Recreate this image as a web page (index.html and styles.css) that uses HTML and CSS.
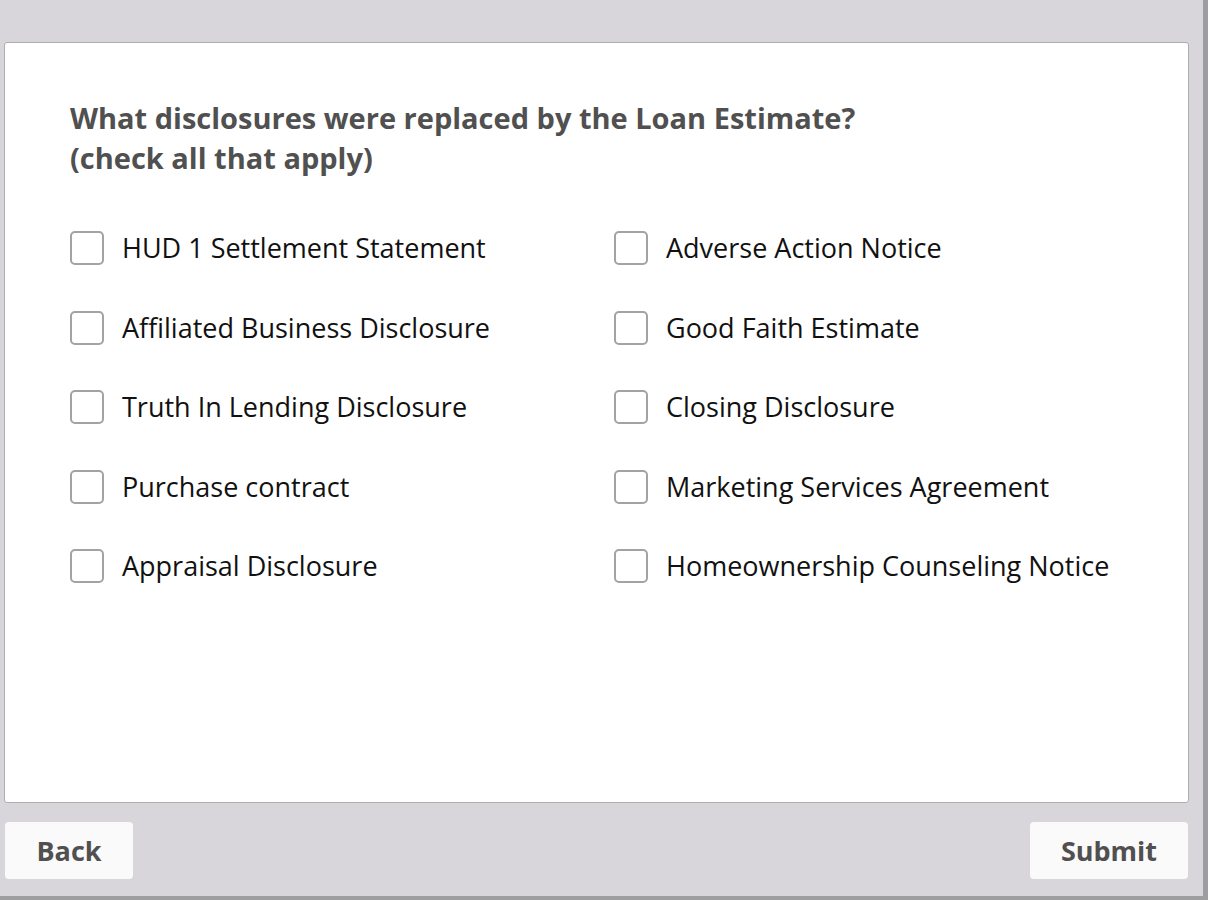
FILE: index.html
```html
<!DOCTYPE html>
<html lang="en">
<head>
    <meta charset="UTF-8">
    <title>Quiz Question</title>
    <link rel="stylesheet" href="styles.css">
</head>
<body>
    <div class="frame">
        <div class="card">
            <h1 class="question">What disclosures were replaced by the Loan Estimate?<br>(check all that apply)</h1>
            <div class="options">
                <label class="option"><span class="box"></span>HUD 1 Settlement Statement</label>
                <label class="option"><span class="box"></span>Adverse Action Notice</label>
                <label class="option"><span class="box"></span>Affiliated Business Disclosure</label>
                <label class="option"><span class="box"></span>Good Faith Estimate</label>
                <label class="option"><span class="box"></span>Truth In Lending Disclosure</label>
                <label class="option"><span class="box"></span>Closing Disclosure</label>
                <label class="option"><span class="box"></span>Purchase contract</label>
                <label class="option"><span class="box"></span>Marketing Services Agreement</label>
                <label class="option"><span class="box"></span>Appraisal Disclosure</label>
                <label class="option"><span class="box"></span>Homeownership Counseling Notice</label>
            </div>
        </div>
        <div class="nav">
            <button class="btn back">Back</button>
            <button class="btn submit">Submit</button>
        </div>
    </div>
</body>
</html>
```

FILE: styles.css
```css
body {
    margin: 0;
    padding: 0;
    background: #9e9da0;
    font-family: "Open Sans", Arial, sans-serif;
    overflow: hidden;
}
.frame {
    width: 1203px;
    height: 896px;
    background: #d8d6db;
    padding-top: 42px;
    box-sizing: border-box;
}
.card {
    margin-left: 4px;
    width: 1185px;
    height: 761px;
    box-sizing: border-box;
    background: #fff;
    border: 1px solid #aeadb0;
    border-radius: 3px;
    padding: 55px 0 0 65px;
}
.question {
    margin: 0;
    font-size: 29px;
    line-height: 40px;
    font-weight: 700;
    color: #505050;
}
.options {
    display: grid;
    grid-template-columns: 544px 544px;
    grid-auto-rows: 79.5px;
    margin-top: 53px;
}
.option {
    display: flex;
    align-items: flex-start;
    font-size: 27px;
    line-height: 34px;
    color: #111;
}
.box {
    width: 34px;
    height: 34px;
    box-sizing: border-box;
    border: 2px solid #a3a3a3;
    border-radius: 5px;
    margin-right: 18px;
    flex: 0 0 auto;
}
.nav {
    display: flex;
    justify-content: space-between;
    margin-top: 19px;
    padding: 0 15px 0 5px;
}
.btn {
    height: 57px;
    border: none;
    border-radius: 4px;
    background: #fafafa;
    font-family: "Open Sans", Arial, sans-serif;
    font-size: 27px;
    font-weight: 700;
    color: #505050;
    padding: 0;
}
.back {
    width: 128px;
}
.submit {
    width: 158px;
}
```
